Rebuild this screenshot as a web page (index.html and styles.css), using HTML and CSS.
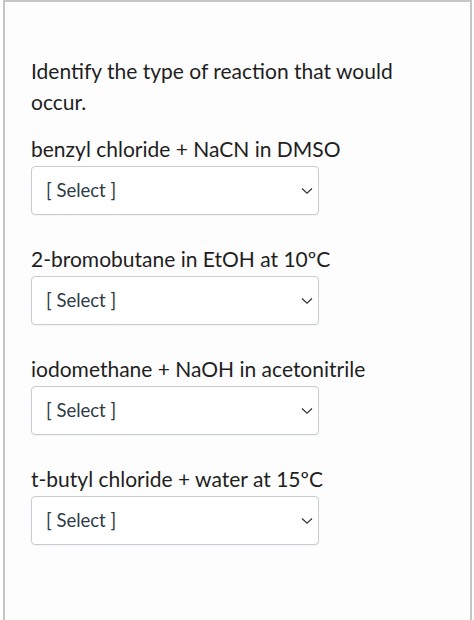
FILE: index.html
```html
<!DOCTYPE html>
<html>
<head>
<meta charset="utf-8">
<link rel="stylesheet" href="styles.css">
</head>
<body>
<div class="frame">
  <p class="question">Identify the type of reaction that would occur.</p>
  <div class="item">
    <div class="label">benzyl chloride + NaCN in DMSO</div>
    <div class="select"><span>[ Select ]</span><svg class="chev" width="12" height="8" viewBox="0 0 12 8"><path d="M1 1.5 L6 6.2 L11 1.5" fill="none" stroke="#333" stroke-width="1.2"/></svg></div>
  </div>
  <div class="item">
    <div class="label">2-bromobutane in EtOH at 10ºC</div>
    <div class="select"><span>[ Select ]</span><svg class="chev" width="12" height="8" viewBox="0 0 12 8"><path d="M1 1.5 L6 6.2 L11 1.5" fill="none" stroke="#333" stroke-width="1.2"/></svg></div>
  </div>
  <div class="item">
    <div class="label">iodomethane + NaOH in acetonitrile</div>
    <div class="select"><span>[ Select ]</span><svg class="chev" width="12" height="8" viewBox="0 0 12 8"><path d="M1 1.5 L6 6.2 L11 1.5" fill="none" stroke="#333" stroke-width="1.2"/></svg></div>
  </div>
  <div class="item">
    <div class="label">t-butyl chloride + water at 15ºC</div>
    <div class="select"><span>[ Select ]</span><svg class="chev" width="12" height="8" viewBox="0 0 12 8"><path d="M1 1.5 L6 6.2 L11 1.5" fill="none" stroke="#333" stroke-width="1.2"/></svg></div>
  </div>
</div>
</body>
</html>
```
FILE: styles.css
```css
html, body {
  margin: 0;
  padding: 0;
  background: #ffffff;
}
body {
  font-family: Lato, "Open Sans", sans-serif;
  color: #1f1f1f;
}
.frame {
  margin-left: 3px;
  width: 469px;
  height: 620px;
  border: 2px solid #c6c6c6;
  border-bottom: none;
  padding: 54px 0 0 26px;
  box-sizing: border-box;
  background: #fdfdfd;
}
.question {
  margin: 0;
  font-size: 21px;
  line-height: 30.5px;
  width: 400px;
}
.item {
  margin-top: 17px;
}
.item + .item {
  margin-top: 29px;
}
.label {
  font-size: 21px;
  line-height: 30px;
  margin-bottom: 2px;
  white-space: nowrap;
}
.select {
  width: 288px;
  height: 49px;
  box-sizing: border-box;
  border: 1px solid #c7cdd1;
  border-radius: 4px;
  background: #ffffff;
  display: flex;
  align-items: center;
  justify-content: space-between;
  padding: 0 5px 0 14px;
  font-size: 18.5px;
  color: #2d3b45;
  box-shadow: 0 1px 1px rgba(0,0,0,0.04);
}
.select span {
  padding-bottom: 2px;
}
.chev {
  display: block;
}
```
